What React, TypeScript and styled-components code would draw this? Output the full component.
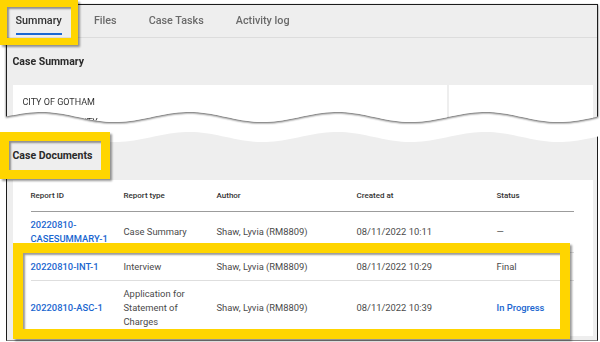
import React from 'react';
import styled, { createGlobalStyle } from 'styled-components';

const GlobalStyle = createGlobalStyle`
  html, body {
    margin: 0;
    padding: 0;
    background: #fff;
  }
  body {
    font-family: Roboto, "Liberation Sans", Arial, sans-serif;
  }
`;

// torn edge of the screenshot: one sine wave, the lower piece follows it 20px lower
const PIECE_W = 592;
const FRAME_X = 6;
const TOP_Y = 4;
const TOP_H = 124;
const BOTTOM_Y = 131;
const BOTTOM_H = 209.5;

const tear = (x: number, base: number) =>
  base - 5 * Math.cos((2 * Math.PI * (x - 337)) / 148);

function wave(base: number, offsetY: number) {
  const pts: string[] = [];
  for (let x = 0; x <= PIECE_W; x += 4) {
    pts.push(`${x} ${(tear(x + FRAME_X, base) - offsetY).toFixed(2)}`);
  }
  return pts;
}

const topClip = `M0 0 L${PIECE_W} 0 L${wave(117, TOP_Y).reverse().join(' L')} Z`;
const bottomClip = `M${wave(137, BOTTOM_Y).join(' L')} L${PIECE_W} ${BOTTOM_H} L0 ${BOTTOM_H} Z`;

const tabs = ['Summary', 'Files', 'Case Tasks', 'Activity log'];

type Doc = {
  id: React.ReactNode;
  type: React.ReactNode;
  author: string;
  created: string;
  status: string;
  inProgress?: boolean;
};

const docs: Doc[] = [
  {
    id: (
      <>
        20220810-
        <br />
        CASESUMMARY-1
      </>
    ),
    type: 'Case Summary',
    author: 'Shaw, Lyvia (RM8809)',
    created: '08/11/2022 10:11',
    status: '—',
  },
  {
    id: '20220810-INT-1',
    type: 'Interview',
    author: 'Shaw, Lyvia (RM8809)',
    created: '08/11/2022 10:29',
    status: 'Final',
  },
  {
    id: '20220810-ASC-1',
    type: 'Application for Statement of Charges',
    author: 'Shaw, Lyvia (RM8809)',
    created: '08/11/2022 10:39',
    status: 'In Progress',
    inProgress: true,
  },
];

export default function App() {
  return (
    <>
      <GlobalStyle />
      <Page>
        <TornTop>
          <TopShot $clip={topClip}>
            <TabBar>
              {tabs.map((t, i) => (
                <Tab key={t} $active={i === 0}>
                  {t}
                </Tab>
              ))}
            </TabBar>
            <Body>
              <SectionTitle>Case Summary</SectionTitle>
              <CardRow>
                <SummaryCard>
                  <CityLine>City of Gotham</CityLine>
                  <CityLine>Gotham County</CityLine>
                </SummaryCard>
                <SideCard />
              </CardRow>
            </Body>
          </TopShot>
        </TornTop>

        <BottomShot $clip={bottomClip}>
          <Body>
            <SectionTitle $lower>Case Documents</SectionTitle>
            <DocsCard>
              <TableRow $head>
                <HeadCell>Report ID</HeadCell>
                <HeadCell>Report type</HeadCell>
                <HeadCell>Author</HeadCell>
                <HeadCell>Created at</HeadCell>
                <HeadCell>Status</HeadCell>
              </TableRow>
              {docs.map((d, i) => (
                <TableRow key={i} $last={i === docs.length - 1}>
                  <Cell $link>{d.id}</Cell>
                  <Cell>{d.type}</Cell>
                  <Cell>{d.author}</Cell>
                  <Cell>{d.created}</Cell>
                  <Cell $link={d.inProgress}>{d.status}</Cell>
                </TableRow>
              ))}
            </DocsCard>
          </Body>
        </BottomShot>

        <Highlight $x={0} $y={0} $w={78} $h={45} $b={7} />
        <Highlight $x={0} $y={132} $w={110} $h={47} $b={9} />
        <Highlight $x={13} $y={243} $w={557} $h={96} $b={10} />
      </Page>
    </>
  );
}

const Page = styled.div`
  position: relative;
  width: 600px;
  height: 342px;
  box-sizing: border-box;
  padding: ${TOP_Y}px 2px 0 ${FRAME_X}px;
  overflow: hidden;
  background: #fff;
`;

const TornTop = styled.div`
  filter: drop-shadow(0 1.5px 1px rgba(0, 0, 0, 0.65));
`;

const Shot = styled.div<{ $clip: string }>`
  box-sizing: border-box;
  display: flex;
  flex-direction: column;
  overflow: hidden;
  background: #eeeeee;
  border: 1.5px solid #1c1c1c;
  clip-path: path('${(p) => p.$clip}');
`;

const TopShot = styled(Shot)`
  height: ${TOP_H}px;
  border-bottom: none;
`;

const BottomShot = styled(Shot)`
  height: ${BOTTOM_H}px;
  margin-top: ${BOTTOM_Y - TOP_Y - TOP_H}px;
  border-top: none;
`;

const TabBar = styled.div`
  display: flex;
  gap: 32px;
  padding: 0 0 2px 8.5px;
  border-bottom: 1px solid #dcdcdc;
`;

const Tab = styled.div<{ $active?: boolean }>`
  padding: 9px 0 5.5px;
  font-size: 10.8px;
  font-weight: 500;
  line-height: 13px;
  color: ${(p) => (p.$active ? '#303030' : '#6a6a6a')};
  border-bottom: 2px solid ${(p) => (p.$active ? '#1a67d2' : 'transparent')};
`;

const Body = styled.div`
  display: flex;
  flex-direction: column;
  flex: 1;
  padding: 0 4.5px 0 5.5px;
`;

const SectionTitle = styled.h2<{ $lower?: boolean }>`
  margin: 0;
  padding: ${(p) => (p.$lower ? '17.5px 0 18.5px' : '17px 0 17px')};
  font-size: 10.5px;
  font-weight: 700;
  line-height: 13px;
  color: #2a2a2a;
`;

const CardRow = styled.div`
  display: flex;
  gap: 2px;
  flex: 1;
`;

const SummaryCard = styled.div`
  display: flex;
  flex-direction: column;
  gap: 6px;
  flex: 1;
  padding: 10px 10px;
  background: #fff;
`;

const SideCard = styled.div`
  width: 144px;
  background: #fff;
`;

const CityLine = styled.div`
  font-size: 9px;
  line-height: 14px;
  color: #333;
  text-transform: uppercase;
`;

const DocsCard = styled.div`
  flex: 1;
  margin-bottom: 6px;
  padding: 0 19px 0 18px;
  background: #fff;
`;

const TableRow = styled.div<{ $head?: boolean; $last?: boolean }>`
  display: grid;
  grid-template-columns: 93px 93px 140px 140px 1fr;
  align-items: center;
  padding: ${(p) => (p.$head ? '9px 0 8px' : '6.5px 0')};
  border-bottom: 1px solid
    ${(p) => (p.$head ? '#9c9c9c' : p.$last ? 'transparent' : '#dedede')};
`;

const HeadCell = styled.div`
  font-size: 8px;
  font-weight: 500;
  line-height: 13.5px;
  color: #333;
`;

const Cell = styled.div<{ $link?: boolean }>`
  padding-right: 8px;
  font-size: 9.4px;
  line-height: 13.8px;
  font-weight: ${(p) => (p.$link ? 500 : 400)};
  color: ${(p) => (p.$link ? '#1a66cf' : '#4a4a4a')};
`;

const Highlight = styled.div<{ $x: number; $y: number; $w: number; $h: number; $b: number }>`
  position: absolute;
  left: ${(p) => p.$x}px;
  top: ${(p) => p.$y}px;
  width: ${(p) => p.$w}px;
  height: ${(p) => p.$h}px;
  box-sizing: border-box;
  border: ${(p) => p.$b}px solid #ffd500;
  box-shadow: 2px 2px 2px rgba(0, 0, 0, 0.4), inset 2px 2px 2px rgba(0, 0, 0, 0.4);
  pointer-events: none;
`;
